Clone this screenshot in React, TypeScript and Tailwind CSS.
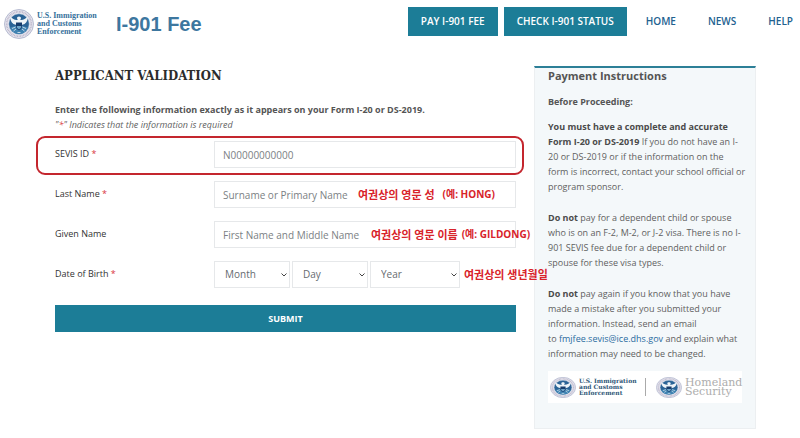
import type { ReactNode } from "react";

function Seal({ className }: { className: string }) {
  return (
    <svg viewBox="0 0 60 60" preserveAspectRatio="none" className={className} aria-hidden="true">
      <circle cx="30" cy="30" r="29" fill="#e6e5ee" stroke="#a3a9c4" strokeWidth="1.5" />
      <circle cx="30" cy="30" r="24.5" fill="none" stroke="#b9b3c8" strokeWidth="3.5" strokeDasharray="1.6 1.5" />
      <circle cx="30" cy="30" r="20.5" fill="#2a6396" stroke="#cfd8e6" strokeWidth="1" />
      <path d="M12 37a19 19 0 0 0 36 0l-11-3H23z" fill="#3f83b2" />
      <path
        d="M30 15c2.500 0 4 1.500 4 3.500L32.500 22C38 23 43 20 47 15c1 6-1 12-6 15l-6 2v3l-5 3-5-3v-3l-6-2c-5-3-7-9-6-15 4 5 9 8 14.500 7L26 18.500c0-2 1.500-3.500 4-3.500z"
        fill="#eef4f8"
      />
      <path d="M24 27h12v8c0 4-3 6-6 8-3-2-6-4-6-8z" fill="#163c6c" />
      <path d="M25.500 34h9c0 4-2 5-4.500 7-2.500-2-4.500-3-4.500-7z" fill="#6fa6c9" />
      <path d="M16 39l7-3M44 39l-7-3M19 44l5-4M41 44l-5-4M27 47h6" stroke="#e4eef4" strokeWidth="1.6" />
    </svg>
  );
}

function Chevron() {
  return (
    <svg viewBox="0 0 8 6" className="pointer-events-none absolute top-1/2 right-[2px] h-[6px] w-2 -translate-y-1/2" aria-hidden="true">
      <path d="M1.500 1.500L4 4l2.500-2.500" fill="none" stroke="#444" strokeWidth="1" />
    </svg>
  );
}

function Required() {
  return <span className="text-[#d9363e]">*</span>;
}

function Note({ className, children }: { className: string; children: ReactNode }) {
  return (
    <span
      className={`pointer-events-none absolute z-10 flex h-[27px] items-center text-[11px] font-bold whitespace-nowrap text-[#d8232a] ${className}`}
    >
      {children}
    </span>
  );
}

function DateSelect({ label, className }: { label: string; className: string }) {
  return (
    <div className={`relative ${className}`}>
      <select
        aria-label={label}
        className="block h-[27px] w-full appearance-none border border-[#e6e8ea] bg-white pl-[10px] text-[10px] text-[#666b70]"
      >
        <option>{label}</option>
      </select>
      <Chevron />
    </div>
  );
}

const fieldRow = "relative flex";
const labelClass = "w-[159px] shrink-0 pt-[5px] leading-[15px] text-[#333]";
const inputClass =
  "h-[27px] min-w-0 flex-1 border border-[#e6e8ea] bg-white px-2 text-[10px] text-[#666] placeholder:text-[#7b7f84]";
const navLink = "text-[#22618f]";

export default function App() {
  return (
    <div className="bg-white font-['Open_Sans','Noto_Sans_CJK_KR',sans-serif] text-[9px] leading-[15px] text-[#5f5f5f]">
      <header className="flex items-start justify-between pr-[7px] pl-1">
        <div className="flex h-12 items-center">
          <Seal className="h-[30px] w-[30px]" />
          <div className="ml-[3px] w-[64px] font-['Liberation_Serif',serif] text-[8px] leading-[8px] font-bold whitespace-nowrap text-[#36719c]">
            <div>U.S. Immigration</div>
            <div>and Customs</div>
            <div>Enforcement</div>
          </div>
          <div className="ml-[15px] font-['Liberation_Sans',sans-serif] text-[20px] leading-6 font-bold text-[#3d779f]">
            I-901 Fee
          </div>
        </div>
        <nav className="flex items-center pt-[7px] text-[10px] font-semibold">
          <button type="button" className="h-[29px] w-[90px] bg-[#1c7d97] text-white">
            PAY I-901 FEE
          </button>
          <button type="button" className="ml-[6px] h-[29px] w-[123px] bg-[#1c7d97] text-white">
            CHECK I-901 STATUS
          </button>
          <a href="#home" className={`ml-[19px] ${navLink}`}>HOME</a>
          <a href="#news" className={`ml-8 ${navLink}`}>NEWS</a>
          <a href="#help" className={`ml-8 ${navLink}`}>HELP</a>
        </nav>
      </header>

      <main className="flex items-start gap-[18px] pt-[18px] pr-[44px] pl-[55px]">
        <form className="min-w-0 flex-1" onSubmit={(event) => event.preventDefault()}>
          <h1 className="font-['DejaVu_Serif_Condensed','DejaVu_Serif',serif] text-[13px] leading-5 font-bold text-[#2b2b2b]">
            APPLICANT VALIDATION
          </h1>
          <p className="mt-4 font-bold text-[#555]">
            Enter the following information exactly as it appears on your Form I-20 or DS-2019.
          </p>
          <p className="italic">
            &quot;<Required />&quot; Indicates that the information is required
          </p>

          <div className="mt-[9px] flex flex-col gap-[13px]">
            <div className={fieldRow}>
              <label htmlFor="sevis" className={labelClass}>SEVIS ID <Required /></label>
              <input id="sevis" type="text" placeholder="N00000000000" className={inputClass} />
              <div className="pointer-events-none absolute -top-[5px] -right-2 -bottom-[7px] -left-[19px] rounded-[9px] border-2 border-[#c4262e]" />
            </div>
            <div className={fieldRow}>
              <label htmlFor="last" className={labelClass}>Last Name <Required /></label>
              <input id="last" type="text" placeholder="Surname or Primary Name" className={inputClass} />
              <Note className="left-[303px] gap-2">
                <span>여권상의 영문 성</span>
                <span className="text-[10px]">(예: HONG)</span>
              </Note>
            </div>
            <div className={fieldRow}>
              <label htmlFor="given" className={labelClass}>Given Name</label>
              <input id="given" type="text" placeholder="First Name and Middle Name" className={inputClass} />
              <Note className="left-[316px] gap-1">
                <span>여권상의 영문 이름</span>
                <span className="text-[10px]">(예: GILDONG)</span>
              </Note>
            </div>
            <div role="group" aria-labelledby="birth" className={fieldRow}>
              <span id="birth" className={labelClass}>Date of Birth <Required /></span>
              <div className="flex gap-[2px]">
                <DateSelect label="Month" className="w-[76px]" />
                <DateSelect label="Day" className="w-[76px]" />
                <DateSelect label="Year" className="w-[90px]" />
              </div>
              <Note className="left-[409px]">여권상의 생년월일</Note>
            </div>
          </div>

          <button type="submit" className="mt-[17px] block h-[27px] w-full bg-[#1c7d97] font-bold text-white">
            SUBMIT
          </button>
        </form>

        <aside className="w-[222px] shrink-0 border border-t-2 border-[#eceff1] border-t-[#2c7f97] bg-[#f4f8fa] pr-[9px] pb-[25px] pl-[13px]">
          <h2 className="text-[11px] leading-4 font-bold text-[#555]">Payment Instructions</h2>
          <p className="mt-[10px] font-bold text-[#555]">Before Proceeding:</p>
          <p className="mt-[10px]">
            <strong className="text-[#4b4b4b]">You must have a complete and accurate Form I-20 or DS-2019</strong> If you
            do not have an I-20 or DS-2019 or if the information on the form is incorrect, contact your school official or
            program sponsor.
          </p>
          <p className="mt-4">
            <strong className="text-[#4b4b4b]">Do not</strong> pay for a dependent child or spouse who is on an F-2, M-2,
            or J-2 visa. There is no I-901 SEVIS fee due for a dependent child or spouse for these visa types.
          </p>
          <p className="mt-4">
            <strong className="text-[#4b4b4b]">Do not</strong> pay again if you know that you have made a mistake after
            you submitted your information. Instead, send an email
            <br />
            to{" "}
            <a href="mailto:fmjfee.sevis@ice.dhs.gov" className="text-[#2b6c9f]">fmjfee.sevis@ice.dhs.gov</a> and explain
            what information may need to be changed.
          </p>
          <div className="mt-[10px] mr-1 flex h-8 items-center bg-white pl-[2px] font-['DejaVu_Serif',serif] whitespace-nowrap">
            <Seal className="h-[21px] w-[26px] shrink-0" />
            <div className="ml-[3px] w-[54px] text-[6px] leading-[6px] font-bold text-[#2f5878]">
              <div>U.S. Immigration</div>
              <div>and Customs</div>
              <div>Enforcement</div>
            </div>
            <div className="ml-3 h-[18px] w-px shrink-0 bg-[#aaa]" />
            <Seal className="ml-[10px] h-[21px] w-[26px] shrink-0" />
            <div className="ml-[3px] text-[11px] leading-[9px] text-[#adadad]">
              <div>Homeland</div>
              <div>Security</div>
            </div>
          </div>
        </aside>
      </main>
    </div>
  );
}
